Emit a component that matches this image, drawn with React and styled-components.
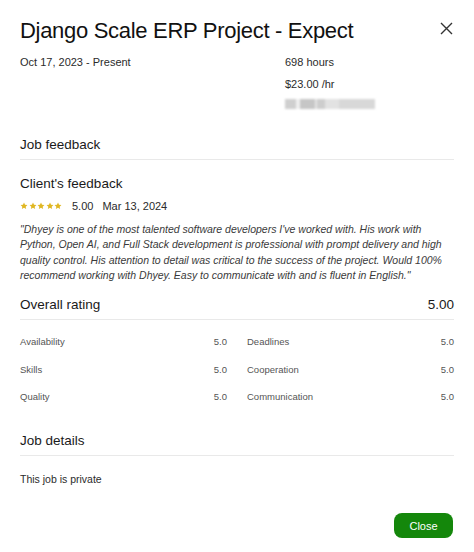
import styled, { createGlobalStyle } from "styled-components";

const GlobalStyle = createGlobalStyle`
  html, body { margin: 0; padding: 0; background: #fff; }
  body { font-family: "Liberation Sans", Arial, sans-serif; color: #1f1f1f; }
`;

const ratings = [
  ["Availability", "5.0", "Deadlines", "5.0"],
  ["Skills", "5.0", "Cooperation", "5.0"],
  ["Quality", "5.0", "Communication", "5.0"],
];

function Star() {
  return (
    <svg width="8" height="8" viewBox="0 0 24 24">
      <path
        fill="#e0b723"
        d="M12 1.5l3.1 6.6 7.2.9-5.3 5 1.4 7.1L12 17.6l-6.4 3.5 1.4-7.1-5.3-5 7.2-.9z"
      />
    </svg>
  );
}

export default function App() {
  return (
    <Modal>
      <GlobalStyle />
      <Header>
        <Title>Django Scale ERP Project - Expect</Title>
        <CloseX aria-label="close">
          <svg width="13" height="13" viewBox="0 0 13 13">
            <path d="M1 1L12 12M12 1L1 12" stroke="#333" strokeWidth="1.4" />
          </svg>
        </CloseX>
      </Header>
      <Meta>
        <MetaText>Oct 17, 2023 - Present</MetaText>
        <MetaCol>
          <MetaText>698 hours</MetaText>
          <MetaText>$23.00 /hr</MetaText>
          <Blurred />
        </MetaCol>
      </Meta>

      <Section $top={27}>
        <SectionTitle>Job feedback</SectionTitle>
      </Section>
      <SubTitle>Client's feedback</SubTitle>
      <StarsRow>
        <Stars>
          {[0, 1, 2, 3, 4].map((i) => (
            <Star key={i} />
          ))}
        </Stars>
        <span>5.00</span>
        <span>Mar 13, 2024</span>
      </StarsRow>
      <Quote>
        "Dhyey is one of the most talented software developers I've worked with. His work with
        Python, Open AI, and Full Stack development is professional with prompt delivery and high
        quality control. His attention to detail was critical to the success of the project. Would 100%
        recommend working with Dhyey. Easy to communicate with and is fluent in English."
      </Quote>

      <Section $top={13}>
        <SectionTitle>Overall rating</SectionTitle>
        <SectionTitle>5.00</SectionTitle>
      </Section>
      <RatingGrid>
        {ratings.map((r) => (
          <RatingRow key={r[0]}>
            <RatingCell>
              <span>{r[0]}</span>
              <span>{r[1]}</span>
            </RatingCell>
            <RatingCell>
              <span>{r[2]}</span>
              <span>{r[3]}</span>
            </RatingCell>
          </RatingRow>
        ))}
      </RatingGrid>

      <Section $top={27}>
        <SectionTitle>Job details</SectionTitle>
      </Section>
      <Private>This job is private</Private>

      <Footer>
        <CloseButton>Close</CloseButton>
      </Footer>
    </Modal>
  );
}

const Modal = styled.div`
  width: 474px;
  height: 552px;
  box-sizing: border-box;
  padding: 17px 20px 0 20px;
  background: #fff;
  overflow: hidden;
`;

const Header = styled.div`
  display: flex;
  justify-content: space-between;
  align-items: flex-start;
`;

const Title = styled.h1`
  margin: 0;
  font-size: 22px;
  line-height: 28px;
  font-weight: 400;
  color: #111;
  letter-spacing: -0.3px;
`;

const CloseX = styled.button`
  border: none;
  background: none;
  padding: 0;
  margin: 5px 1px 0 0;
  cursor: pointer;
  display: flex;
`;

const Meta = styled.div`
  display: grid;
  grid-template-columns: 265px 1fr;
  margin-top: 9px;
`;

const MetaCol = styled.div`
  display: flex;
  flex-direction: column;
  gap: 6px;
`;

const MetaText = styled.div`
  font-size: 11px;
  line-height: 16px;
  color: #2b2b2b;
`;

const Blurred = styled.div`
  width: 90px;
  height: 10px;
  margin-top: 1px;
  background: linear-gradient(
    90deg,
    #cfcfcf 0 12%,
    #f0f0f0 12% 17%,
    #c6c6c6 17% 33%,
    #e6e6e6 33% 36%,
    #cdcdcd 36% 44%,
    #e2e2e2 44% 60%,
    #d8d8d8 60% 100%
  );
  filter: blur(1.2px);
`;

const Section = styled.div`
  display: flex;
  justify-content: space-between;
  align-items: center;
  margin-top: ${(p) => p.$top ?? 17}px;
  padding-bottom: 5px;
  border-bottom: 1px solid #e9e9e9;
`;

const SectionTitle = styled.div`
  font-size: 13.5px;
  line-height: 18px;
  color: #1a1a1a;
`;

const SubTitle = styled.div`
  font-size: 13.5px;
  line-height: 18px;
  color: #1a1a1a;
  margin-top: 15px;
`;

const StarsRow = styled.div`
  display: flex;
  align-items: center;
  gap: 10px;
  margin-top: 5px;
  font-size: 11px;
  line-height: 16px;
  color: #2b2b2b;
  span + span {
    margin-left: -1px;
  }
`;

const Stars = styled.div`
  display: flex;
  gap: 0.5px;
`;

const Quote = styled.p`
  margin: 8px 0 0 0;
  max-width: 432px;
  font-size: 10.5px;
  line-height: 15.3px;
  font-style: italic;
  color: #3a3a3a;
`;

const RatingGrid = styled.div`
  display: flex;
  flex-direction: column;
  gap: 11.5px;
  margin-top: 14px;
`;

const RatingRow = styled.div`
  display: grid;
  grid-template-columns: 1fr 1fr;
  column-gap: 20px;
`;

const RatingCell = styled.div`
  display: flex;
  justify-content: space-between;
  font-size: 9.5px;
  line-height: 16px;
  color: #555;
`;

const Private = styled.div`
  margin-top: 15px;
  font-size: 10.5px;
  line-height: 16px;
  color: #2b2b2b;
`;

const Footer = styled.div`
  display: flex;
  justify-content: flex-end;
  margin-top: 26px;
  padding-right: 1px;
`;

const CloseButton = styled.button`
  width: 59px;
  height: 25px;
  border: none;
  border-radius: 8px;
  background: #14870b;
  color: #fff;
  font-family: "Liberation Sans", Arial, sans-serif;
  font-size: 11px;
  cursor: pointer;
`;
